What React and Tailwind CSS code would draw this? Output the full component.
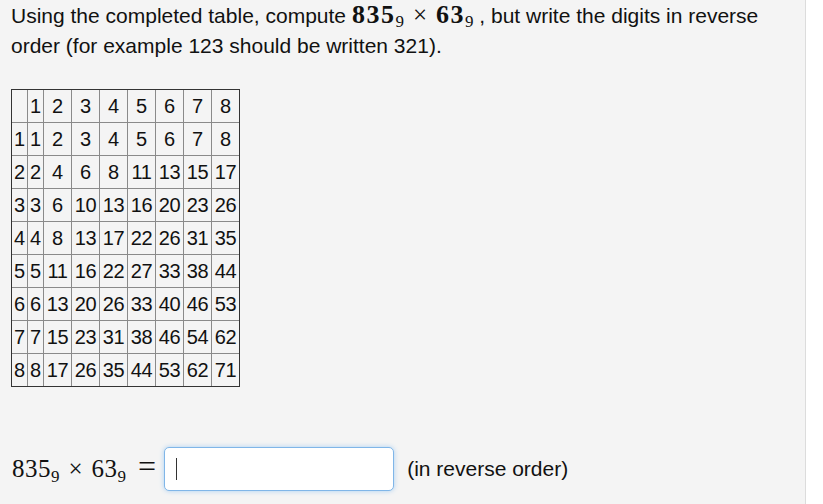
import React from 'react';

const rows = [
  ['', 1, 2, 3, 4, 5, 6, 7, 8],
  [1, 1, 2, 3, 4, 5, 6, 7, 8],
  [2, 2, 4, 6, 8, 11, 13, 15, 17],
  [3, 3, 6, 10, 13, 16, 20, 23, 26],
  [4, 4, 8, 13, 17, 22, 26, 31, 35],
  [5, 5, 11, 16, 22, 27, 33, 38, 44],
  [6, 6, 13, 20, 26, 33, 40, 46, 53],
  [7, 7, 15, 23, 31, 38, 46, 54, 62],
  [8, 8, 17, 26, 35, 44, 53, 62, 71],
];

// base-9 number with subscript, KaTeX-ish
const Num = ({ value, bold }) => (
  <span
    className={`font-['Liberation_Serif',serif] ${
      bold ? 'text-[26px] font-bold tracking-[1.5px]' : 'text-[25px] tracking-[0.5px]'
    }`}
  >
    {value}
    <sub className="text-[17px] font-normal tracking-normal">9</sub>
  </span>
);

const Times = () => (
  <span className="font-['Liberation_Serif',serif] text-[25px] mx-[9px]">×</span>
);

export default function App() {
  return (
    <div className="flex w-[823px] min-h-[504px] font-['Liberation_Sans',Arial,sans-serif] text-[#111]">
      <div className="w-[806px] bg-[#f4f4f4] border-r border-[#dcdcdc] px-[11px]">
        <p className="text-[21px] leading-[30px] pr-[24px]">
          Using the completed table, compute <Num value="835" bold />
          <Times />
          <Num value="63" bold /> , but write the digits in reverse order (for example 123 should be written 321).
        </p>

        <div className="mt-[28px] inline-grid grid-cols-[15px_15px_repeat(7,27px)] grid-rows-[repeat(9,32px)] gap-px bg-[#8a8a8a] border border-[#333]">
          {rows.flat().map((v, i) => (
            <div key={i} className="bg-[#f4f4f4] flex items-center justify-center text-[20px] tracking-[-0.3px]">
              {v}
            </div>
          ))}
        </div>

        <div className="mt-[60px] flex items-center">
          <span className="pl-px">
            <Num value="835" />
            <Times />
            <Num value="63" />
            <span className="font-['Liberation_Serif',serif] text-[32px] ml-[12px] leading-none">=</span>
          </span>
          <div className="ml-[8px] w-[230px] h-[44px] bg-white border border-[#80b6e8] rounded-[5px] shadow-[0_0_5px_#a9cff2] flex items-center pl-[11px]">
            <span className="w-px h-[22px] bg-[#333]" />
          </div>
          <span className="ml-[13px] text-[21px]">(in reverse order)</span>
        </div>
      </div>
      <div className="flex-1 bg-white" />
    </div>
  );
}
